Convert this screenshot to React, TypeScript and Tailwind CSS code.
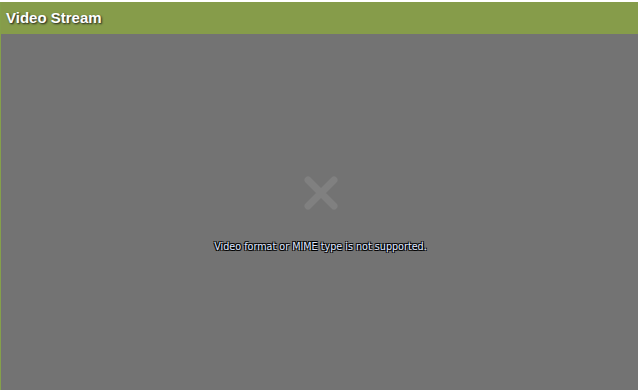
export default function App() {
  return (
    <main className="h-[390px] w-[638px] bg-white pt-[2px]">
      <section className="flex h-[388px] flex-col border-l border-[#85a04a] bg-[#737373]">
        <header className="flex h-[32px] items-center bg-[#869c4a] px-[5px]">
          <h1 className="font-['Liberation_Sans',Arial,sans-serif] text-[15px] font-bold text-white [text-shadow:1px_1px_2px_#1a1a1a]">
            Video Stream
          </h1>
        </header>
        <div className="flex flex-1 flex-col items-center pt-[141px]">
          <svg width="36" height="36" viewBox="0 0 36 36" className="ml-[2px]">
            <path
              d="M5 5 L31 31 M31 5 L5 31"
              stroke="#808080"
              strokeWidth="7"
              strokeLinecap="round"
            />
          </svg>
          <p className="mt-[28px] ml-[2px] font-['DejaVu_Sans_Condensed','Liberation_Sans',sans-serif] text-[10.7px] text-[#dfe6ff] [text-shadow:1px_1px_0_#000,-1px_-1px_0_#000,1px_-1px_0_#000,-1px_1px_0_#000]">
            Video format or MIME type is not supported.
          </p>
        </div>
      </section>
    </main>
  );
}
